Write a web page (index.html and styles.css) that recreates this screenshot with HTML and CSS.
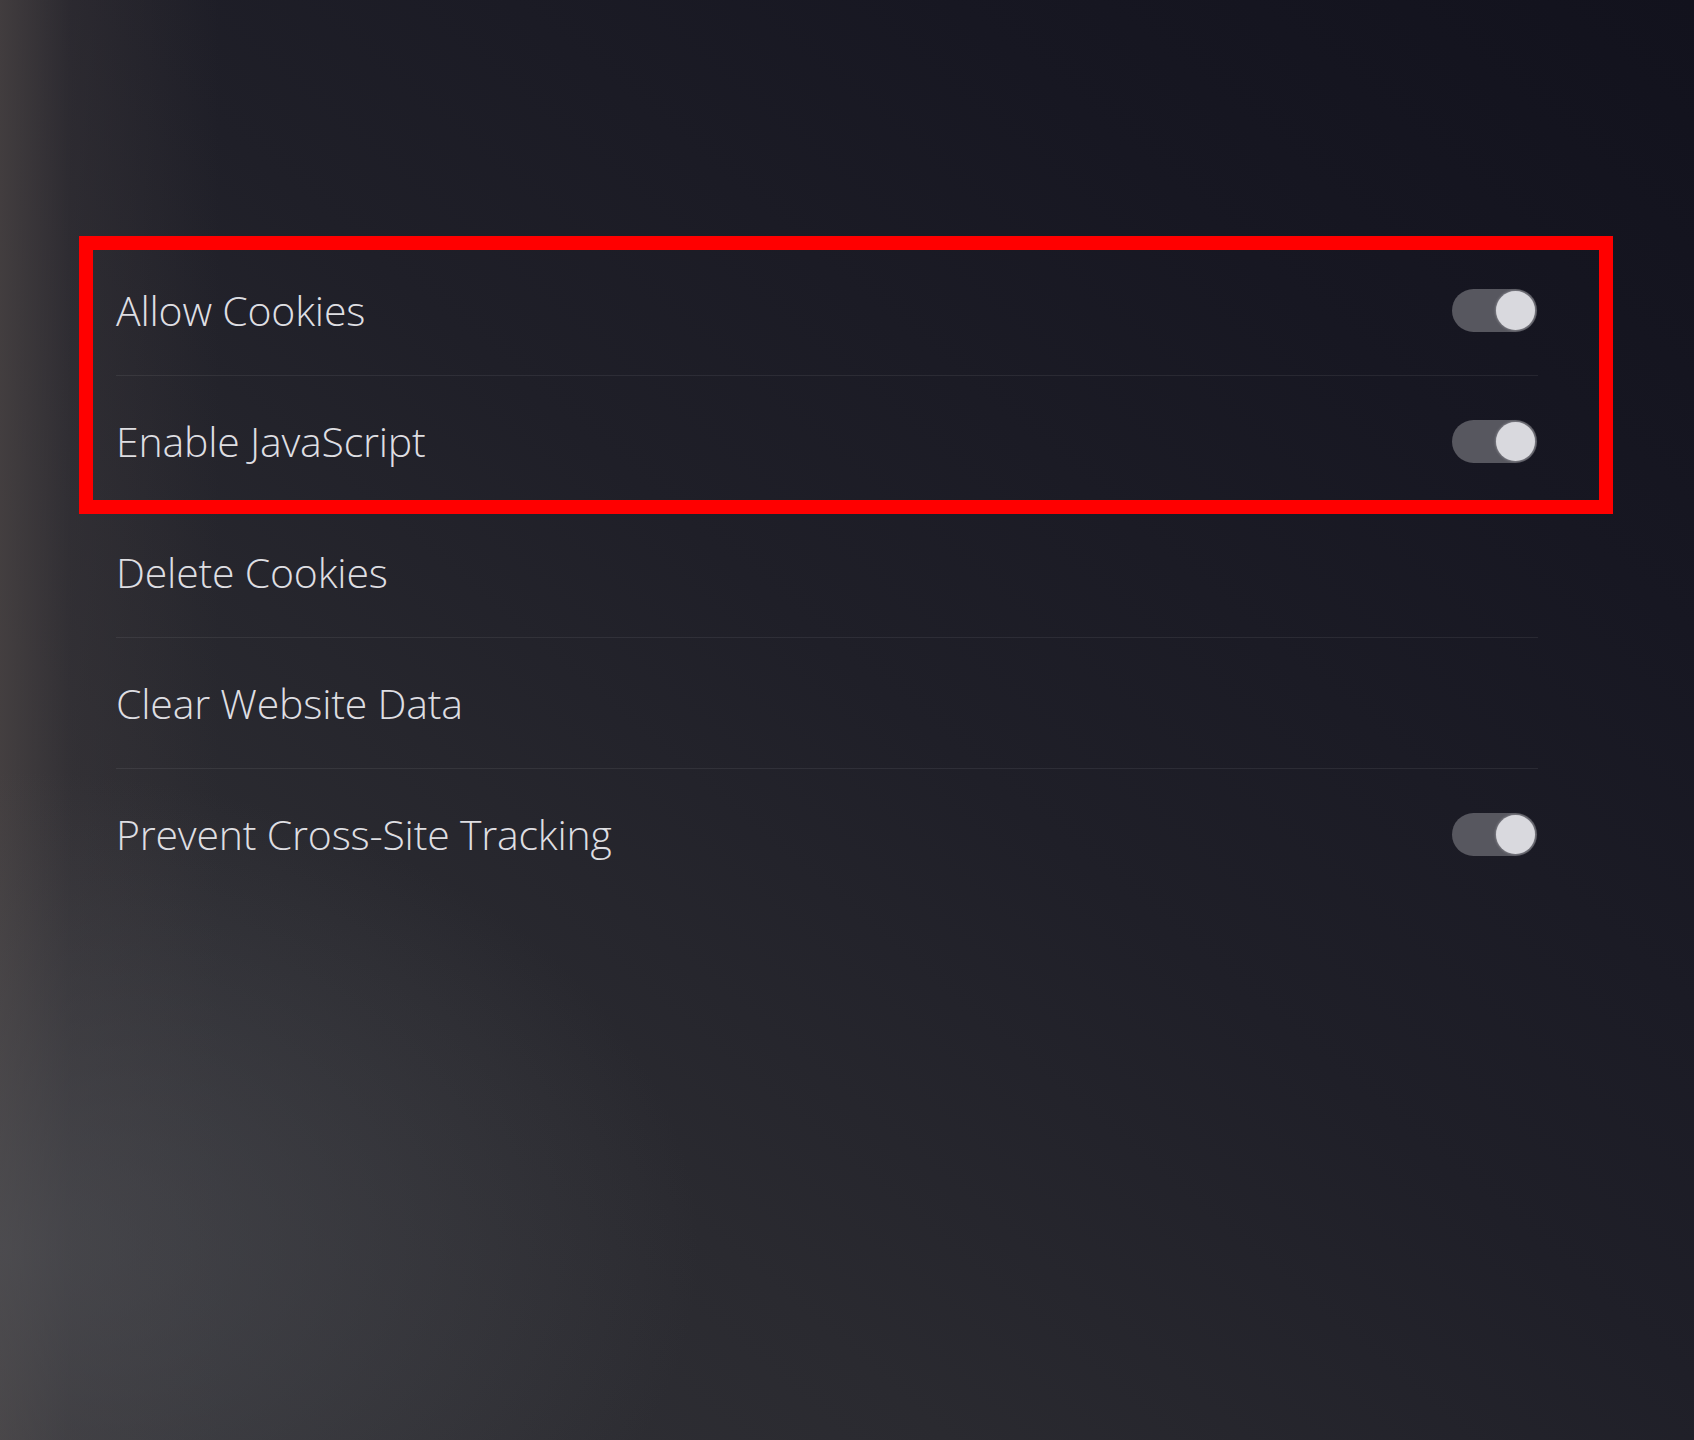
FILE: index.html
```html
<!DOCTYPE html>
<html lang="en">
<head>
<meta charset="utf-8">
<title>Privacy Settings</title>
<link rel="stylesheet" href="styles.css">
</head>
<body>
<main class="screen">
  <ul class="settings">
    <li class="row">
      <span class="label">Allow Cookies</span>
      <span class="toggle on"><span class="knob"></span></span>
    </li>
    <li class="row">
      <span class="label">Enable JavaScript</span>
      <span class="toggle on"><span class="knob"></span></span>
    </li>
    <li class="row">
      <span class="label">Delete Cookies</span>
    </li>
    <li class="row">
      <span class="label">Clear Website Data</span>
    </li>
    <li class="row last">
      <span class="label">Prevent Cross-Site Tracking</span>
      <span class="toggle on"><span class="knob"></span></span>
    </li>
    <li class="highlight" aria-hidden="true"></li>
  </ul>
</main>
</body>
</html>
```

FILE: styles.css
```css
html, body {
  margin: 0;
  padding: 0;
}

body {
  width: 1694px;
  min-height: 1440px;
  overflow: hidden;
  font-family: "Open Sans", "Noto Sans", sans-serif;
  color: #dedee2;
  background:
    radial-gradient(ellipse 700px 480px at 0px 1250px, rgba(80, 81, 86, 0.65), rgba(80, 81, 86, 0) 100%),
    linear-gradient(to right, rgba(74, 68, 68, 0.8) 0px, rgba(62, 57, 60, 0.4) 70px, rgba(40, 38, 45, 0) 220px),
    linear-gradient(to top right, #333338 0%, #2a2a30 28%, #1f1f28 52%, #171722 78%, #12121d 100%);
}

.screen {
  padding: 245px 0 0 116px;
}

.settings {
  position: relative;
  list-style: none;
  margin: 0;
  padding: 0;
  width: 1422px;
}

.row {
  height: 130px;
  display: flex;
  align-items: center;
  justify-content: space-between;
  border-bottom: 1px solid rgba(255, 255, 255, 0.07);
}

.row.last {
  border-bottom: none;
}

.label {
  font-size: 41px;
  font-weight: 300;
  letter-spacing: -0.2px;
  white-space: nowrap;
}

.toggle {
  width: 85px;
  height: 43px;
  border-radius: 22px;
  background: #57575f;
  display: flex;
  align-items: center;
  justify-content: flex-end;
  padding: 0 2px;
  box-sizing: border-box;
  margin-right: 1px;
}

.knob {
  width: 39px;
  height: 39px;
  border-radius: 50%;
  background: #d9d9de;
  box-shadow: 0 0 3px rgba(225, 225, 232, 0.55);
}

.highlight {
  position: absolute;
  left: -37px;
  top: -9px;
  width: 1534px;
  height: 278px;
  box-sizing: border-box;
  border: 14px solid #ff0000;
  pointer-events: none;
}
```
